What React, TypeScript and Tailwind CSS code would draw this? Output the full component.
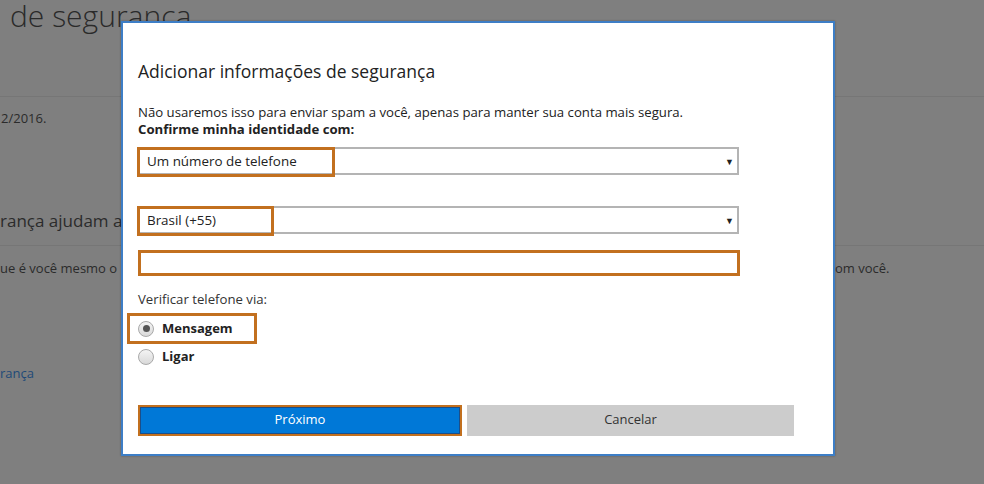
const font = { fontFamily: '"Open Sans", "Noto Sans", sans-serif' }

function Caret() {
  return <span className="text-[9px] leading-none text-[#222]">▼</span>
}

function SelectBox({ label, boxWidth }: { label: string; boxWidth: string }) {
  return (
    <div className="relative flex h-[28px] w-[601px] items-center justify-between border-2 border-[#b4b4b4] bg-white pl-[7px] pr-[3px]">
      <span className="text-[13.4px] text-[#222]">{label}</span>
      <Caret />
      <div className={`absolute -left-[3px] -top-[2px] h-[30px] border-[3px] border-[#c2701f] ${boxWidth}`} />
    </div>
  )
}

function Radio({ checked, label }: { checked?: boolean; label: string }) {
  return (
    <div className="flex items-center gap-[8px]">
      <span className="flex h-[16px] w-[16px] items-center justify-center rounded-full border border-[#a9a9a9] bg-gradient-to-b from-[#f4f4f4] to-[#d9d9d9]">
        {checked && <span className="h-[7px] w-[7px] rounded-full bg-[#555]" />}
      </span>
      <span className="text-[13px] font-bold text-[#222]">{label}</span>
    </div>
  )
}

export default function App() {
  return (
    <div className="relative h-[484px] w-[984px] overflow-hidden bg-[#7f7f7f]" style={font}>
      {/* page behind the overlay */}
      <div className="flex flex-col text-[#2b2b2b]">
        <div className="-mt-[4px] pl-[10px] text-[30px] font-light leading-[40px] text-[#2a2a2a]">de segurança</div>
        <div className="mt-[60px] h-px bg-[#767676]" />
        <div className="mt-[12px] pl-[1px] text-[13px] leading-[18px]">2/2016.</div>
        <div className="mt-[82px] text-[17px] leading-[24px]">rança ajudam a</div>
        <div className="mt-[12px] h-px bg-[#767676]" />
        <div className="mt-[13px] flex text-[13px] leading-[18px]">
          <span>ue é você mesmo o</span>
          <span className="ml-auto w-[149px]">om você.</span>
        </div>
        <div className="mt-[87px] text-[13px] leading-[18px] text-[#1e4a78]">rança</div>
      </div>

      {/* dialog */}
      <div className="absolute left-[121px] top-[21px] h-[435px] w-[714px] border-2 border-[#3d7ec6] bg-white pl-[15px] shadow-[0_0_2px_rgba(0,0,0,0.3)]">
        <h2 className="mt-[36px] text-[17.5px] leading-[24px] text-[#222]">Adicionar informações de segurança</h2>
        <p className="mt-[21px] text-[13.2px] leading-[17px] text-[#222]">
          Não usaremos isso para enviar spam a você, apenas para manter sua conta mais segura.
        </p>
        <p className="text-[13.2px] font-bold leading-[17px] text-[#222]">Confirme minha identidade com:</p>

        <div className="mt-[9px]">
          <SelectBox label="Um número de telefone" boxWidth="w-[198px]" />
        </div>
        <div className="mt-[31px]">
          <SelectBox label="Brasil (+55)" boxWidth="w-[137px]" />
        </div>
        <div className="mt-[16px] h-[26px] w-[602px] border-[3px] border-[#c2701f] bg-white" />

        <p className="mt-[15px] text-[13.2px] leading-[17px] text-[#333]">Verificar telefone via:</p>
        <div className="mt-[5px] flex flex-col gap-[10px]">
          <div className="-ml-[11px] flex h-[31px] w-[130px] items-center border-[3px] border-[#c2701f] pl-[8px]">
            <Radio checked label="Mensagem" />
          </div>
          <div className="-mt-[7px]">
            <Radio label="Ligar" />
          </div>
        </div>

        <div className="mt-[38px] flex gap-[5px]">
          <button className="flex h-[31px] w-[324px] items-center justify-center border-2 border-[#c2701f] bg-[#0078d7] text-[13px] text-white outline outline-1 -outline-offset-3 outline-[#1b4f8a]">
            Próximo
          </button>
          <button className="flex h-[31px] w-[327px] items-center justify-center bg-[#cccccc] text-[13px] text-[#333]">
            Cancelar
          </button>
        </div>
      </div>
    </div>
  )
}
